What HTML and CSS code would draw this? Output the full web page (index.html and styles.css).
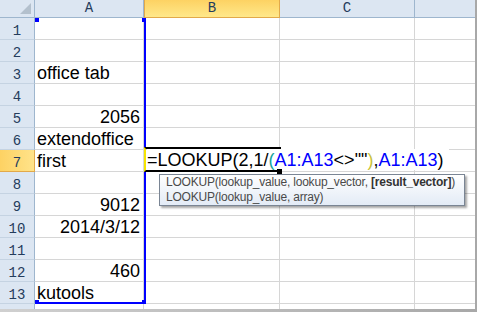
FILE: index.html
```html
<!DOCTYPE html>
<html lang="en">
<head>
    <meta charset="UTF-8">
    <title>LOOKUP last value</title>
    <link rel="stylesheet" href="styles.css">
</head>
<body>
    <div class="window">
        <div class="sheet">
            <div class="corner"><span class="corner-tri"></span></div>
            <div class="col-head">A</div>
            <div class="col-head active">B</div>
            <div class="col-head">C</div>
            <div class="col-head last"></div>

            <div class="row-head">1</div><div class="cell"></div><div class="cell"></div><div class="cell"></div><div class="cell last"></div>
            <div class="row-head">2</div><div class="cell"></div><div class="cell"></div><div class="cell"></div><div class="cell last"></div>
            <div class="row-head">3</div><div class="cell">office tab</div><div class="cell"></div><div class="cell"></div><div class="cell last"></div>
            <div class="row-head">4</div><div class="cell"></div><div class="cell"></div><div class="cell"></div><div class="cell last"></div>
            <div class="row-head">5</div><div class="cell num">2056</div><div class="cell"></div><div class="cell"></div><div class="cell last"></div>
            <div class="row-head">6</div><div class="cell">extendoffice</div><div class="cell"></div><div class="cell"></div><div class="cell last"></div>
            <div class="row-head active">7</div><div class="cell">first</div><div class="cell"></div><div class="cell"></div><div class="cell last"></div>
            <div class="row-head">8</div><div class="cell"></div><div class="cell"></div><div class="cell"></div><div class="cell last"></div>
            <div class="row-head">9</div><div class="cell num">9012</div><div class="cell"></div><div class="cell"></div><div class="cell last"></div>
            <div class="row-head">10</div><div class="cell num">2014/3/12</div><div class="cell"></div><div class="cell"></div><div class="cell last"></div>
            <div class="row-head">11</div><div class="cell"></div><div class="cell"></div><div class="cell"></div><div class="cell last"></div>
            <div class="row-head">12</div><div class="cell num">460</div><div class="cell"></div><div class="cell"></div><div class="cell last"></div>
            <div class="row-head">13</div><div class="cell">kutools</div><div class="cell"></div><div class="cell"></div><div class="cell last"></div>
            <div class="row-head"></div><div class="cell"></div><div class="cell"></div><div class="cell"></div><div class="cell last"></div>

            <!-- reference range A1:A13 -->
            <div class="range"></div>
            <span class="handle h-tl"></span>
            <span class="handle h-tr"></span>
            <span class="handle h-bl"></span>
            <span class="handle h-br"></span>

            <!-- cell B7 in edit mode -->
            <div class="edit">
                <span class="formula">=LOOKUP(2,1/<span class="p1">(</span><span class="ref">A1:A13</span>&lt;&gt;""<span class="p2">)</span>,<span class="ref">A1:A13</span>)</span>
            </div>
            <span class="fill-handle"></span>

            <div class="tip">
                <div>LOOKUP(lookup_value, lookup_vector, <b>[result_vector]</b>)</div>
                <div>LOOKUP(lookup_value, array)</div>
            </div>
        </div>
    </div>
</body>
</html>
```

FILE: styles.css
```css
body {
    margin: 0;
    background-color: #fff;
}
.window {
    width: 477px;
    height: 312px;
    background: linear-gradient(to right, #d0d0d0, #a8a8a8);
    overflow: hidden;
}
.sheet {
    position: relative;
    width: 475px;
    height: 309px;
    overflow: hidden;
    background-color: #fff;
    display: grid;
    grid-template-columns: 35px 109px 136px 135px 60px;
    grid-template-rows: 18px repeat(14, 22px);
}
.corner,
.col-head,
.row-head {
    box-sizing: border-box;
    background-color: #dce6f2;
    border-right: 1px solid #9eb6ce;
    border-bottom: 1px solid #9eb6ce;
    color: #243c5c;
    font-family: "Liberation Mono", "DejaVu Sans Mono", monospace;
}
.corner {
    position: relative;
}
.corner-tri {
    position: absolute;
    right: 3px;
    bottom: 3px;
    width: 0;
    height: 0;
    border-left: 11px solid transparent;
    border-bottom: 11px solid #b3c0cd;
}
.col-head {
    font-size: 14px;
    line-height: 17px;
    text-align: center;
}
.col-head.active {
    background: linear-gradient(#fdd263, #ffe88a);
    border-left: 1px solid #e2a94a;
    border-right-color: #e2a94a;
    border-bottom-color: #e2a94a;
}
.col-head.last {
    border-right: none;
}
.row-head {
    font-size: 14px;
    line-height: 26px;
    text-align: center;
    border-bottom-color: #c5d3e2;
}
.row-head.active {
    background: linear-gradient(to right, #fdd263, #ffe38a);
    border-right-color: #e2a94a;
    border-bottom-color: #e2a94a;
}
.cell {
    box-sizing: border-box;
    border-right: 1px solid #d6d6d6;
    border-bottom: 1px solid #d6d6d6;
    padding: 0 3px 0 2px;
    font-family: "Liberation Sans", Arial, sans-serif;
    font-size: 18px;
    line-height: 20px;
    color: #000;
    display: flex;
    align-items: flex-end;
    white-space: nowrap;
}
.cell.num {
    justify-content: flex-end;
}
.cell.last {
    border-right: none;
}
.range {
    position: absolute;
    left: 35px;
    top: 18px;
    width: 109px;
    height: 284px;
    border-right: 2px solid #0000ff;
    border-bottom: 2px solid #0000ff;
}
.handle {
    position: absolute;
    width: 4px;
    height: 4px;
    background-color: #0000ff;
}
.h-tl { left: 35px; top: 18px; }
.h-tr { left: 142px; top: 18px; }
.h-bl { left: 35px; top: 300px; }
.h-br { left: 142px; top: 300px; }
.edit {
    position: absolute;
    left: 144px;
    top: 147px;
    width: 137px;
    height: 25px;
    box-sizing: border-box;
    border-top: 2px solid #000;
    border-bottom: 2px solid #000;
    border-left: 2px solid #f5e400;
}
.formula {
    position: absolute;
    left: 1px;
    top: 0;
    height: 21px;
    padding-right: 6px;
    background-color: #fff;
    font-family: "Liberation Sans", Arial, sans-serif;
    font-size: 18px;
    line-height: 22px;
    white-space: nowrap;
    color: #000;
}
.ref {
    color: #0000ff;
}
.p1 {
    color: #17a39a;
}
.p2 {
    color: #c9c23a;
}
.fill-handle {
    position: absolute;
    left: 277px;
    top: 169px;
    width: 5px;
    height: 5px;
    background-color: #000;
}
.tip {
    position: absolute;
    left: 159px;
    top: 174px;
    width: 306px;
    height: 32px;
    box-sizing: border-box;
    padding: 0 0 0 6px;
    border: 1px solid #7a8594;
    background: linear-gradient(#ffffff, #e3ebf6);
    box-shadow: 2px 2px 2px rgba(0, 0, 0, 0.35);
    font-family: "Liberation Sans", Arial, sans-serif;
    font-size: 12px;
    letter-spacing: -0.2px;
    line-height: 15px;
    color: #4a4a4a;
    white-space: nowrap;
}
.tip b {
    color: #333;
}
```
